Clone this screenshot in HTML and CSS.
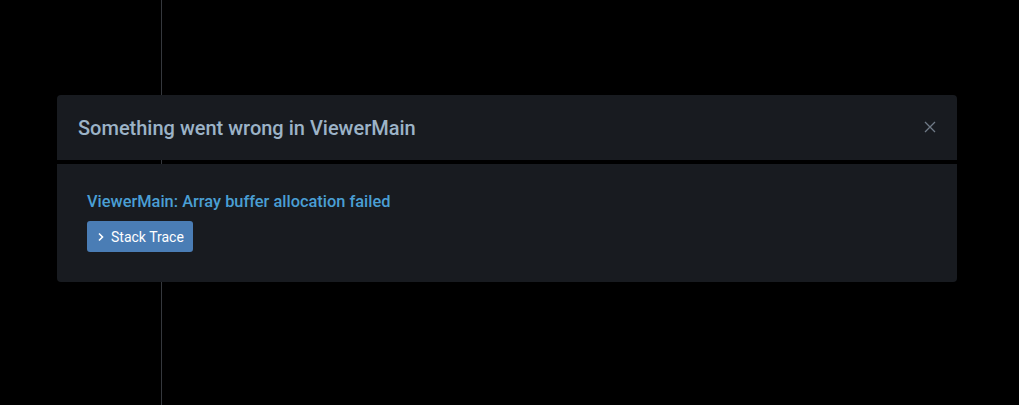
FILE: index.html
```html
<!DOCTYPE html>
<html>
<head>
<meta charset="utf-8">
<link rel="stylesheet" href="styles.css">
</head>
<body>
<div class="divider"></div>
<div class="modal">
  <div class="modal-header">
    <h2 class="modal-title">Something went wrong in ViewerMain</h2>
    <svg class="close" width="12" height="12" viewBox="0 0 12 12"><path d="M1 1L11 11M11 1L1 11" stroke="#6f7a86" stroke-width="1.3" fill="none"/></svg>
  </div>
  <div class="modal-body">
    <div class="error-msg">ViewerMain: Array buffer allocation failed</div>
    <button class="trace-btn">
      <svg width="8" height="10" viewBox="0 0 8 10"><path d="M2 1.5L5.5 5L2 8.5" stroke="#fff" stroke-width="1.6" fill="none"/></svg>
      <span>Stack Trace</span>
    </button>
  </div>
</div>
</body>
</html>
```
FILE: styles.css
```css
html, body {
  margin: 0;
  padding: 0;
  background: #000;
  height: 405px;
  overflow: hidden;
  font-family: Roboto, "Liberation Sans", sans-serif;
}
.divider {
  position: absolute;
  left: 161px;
  top: 0;
  width: 1px;
  height: 405px;
  background: #35383d;
}
.modal {
  position: relative;
  margin: 95px 0 0 57px;
  width: 900px;
  display: flex;
  flex-direction: column;
  gap: 4px;
}
.modal-header {
  height: 65px;
  background: #181b20;
  border-radius: 4px 4px 0 0;
  display: flex;
  align-items: center;
  justify-content: space-between;
  padding: 0 21px 0 21px;
  box-sizing: border-box;
}
.modal-title {
  margin: 0;
  font-size: 20px;
  font-weight: 500;
  color: #9cb3c7;
}
.close {
  display: block;
  margin-top: -2px;
}
.modal-body {
  height: 118px;
  background: #181b20;
  border-radius: 0 0 4px 4px;
  padding: 28px 30px 0 30px;
  box-sizing: border-box;
}
.error-msg {
  font-size: 16.4px;
  font-weight: 500;
  color: #4a9fd4;
  line-height: 20px;
}
.trace-btn {
  margin-top: 9px;
  height: 31px;
  width: 106px;
  background: #4a7db5;
  border: none;
  border-radius: 3px;
  color: #fff;
  font-family: inherit;
  font-size: 14px;
  display: flex;
  align-items: center;
  gap: 6px;
  padding: 0 0 0 10px;
}
```
